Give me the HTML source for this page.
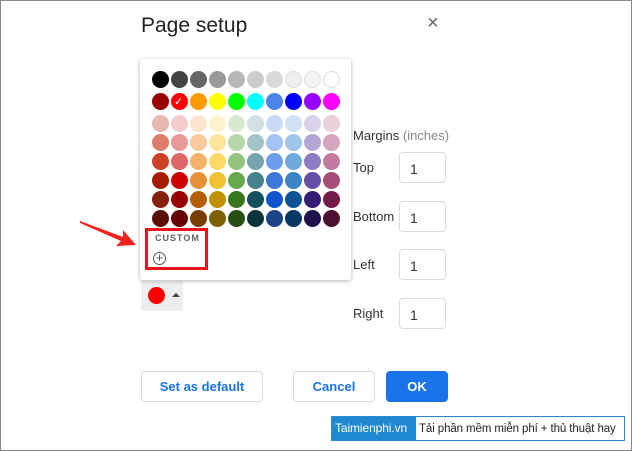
<!DOCTYPE html><html><head><style>
body{margin:0;width:632px;height:451px;position:relative;overflow:hidden;background:#fff;font-family:"Liberation Sans",Arial,sans-serif}
.a{position:absolute}
.c{position:absolute;width:17px;height:17px;border-radius:50%;box-sizing:border-box}
.inp{position:absolute;left:399px;width:47px;height:31px;border:1px solid #dadce0;border-radius:4px;box-sizing:border-box;font-size:14px;color:#333;padding:8px 0 0 10px}
.lb{position:absolute;left:353px;font-size:13px;color:#333}
.btn{position:absolute;top:371px;height:31px;border:1px solid #dadce0;border-radius:4px;box-sizing:border-box;color:#1a73e8;font-size:13px;text-align:center;line-height:29px;font-weight:bold}
</style></head><body>
<div class="a" style="left:0;top:0;width:630px;height:449px;border:1px solid #888"></div>
<div class="a" style="left:141px;top:14px;font-size:21px;color:#222">Page setup</div>
<div class="a" style="left:427px;top:12px;font-size:20px;color:#666">×</div>
<div class="lb" style="top:128px">Margins <span style="color:#888">(inches)</span></div>
<div class="lb" style="top:160px">Top</div><div class="inp" style="top:152px">1</div>
<div class="lb" style="top:209px">Bottom</div><div class="inp" style="top:201px">1</div>
<div class="lb" style="top:257px">Left</div><div class="inp" style="top:249px">1</div>
<div class="lb" style="top:306px">Right</div><div class="inp" style="top:298px">1</div>
<div class="a" style="left:141px;top:281px;width:42px;height:30px;background:#eee;border-radius:2px"></div>
<div class="c" style="left:148px;top:287px;background:#f00"></div>
<div class="a" style="left:172px;top:293px;width:0;height:0;border:4px solid transparent;border-bottom:4px solid #444;border-top:0"></div>
<div class="btn" style="left:141px;width:122px">Set as default</div>
<div class="btn" style="left:293px;width:82px">Cancel</div>
<div class="btn" style="left:386px;width:62px;background:#1a73e8;color:#fff;border-color:#1a73e8">OK</div>
<div class="a" style="left:140px;top:59px;width:211px;height:221px;background:#fff;box-shadow:0 1px 4px rgba(0,0,0,.3);border-radius:3px"></div>
<div id="g"></div>
<div class="a" style="left:145px;top:228px;width:63px;height:42px;border:3px solid #e8141b;box-sizing:border-box"></div>
<div class="a" style="left:155px;top:233px;font-size:9px;letter-spacing:1px;color:#5f6368;font-weight:bold">CUSTOM</div>
<div class="a" style="left:153px;top:252px;width:13px;height:13px;border:1.5px solid #555;border-radius:50%;box-sizing:border-box;font-size:13px;line-height:9px;text-align:center;color:#555">+</div>
<svg class="a" style="left:78px;top:218px" width="60" height="32"><polygon points="2,3 45,19 45,12 58,27 38,28 43,23 2,5" fill="#f3221e"/></svg>
<div class="a" style="left:331px;top:416px;width:294px;height:25px;border:1px solid #2a8ad4;box-sizing:border-box;font-size:11.5px;line-height:23px;white-space:nowrap;overflow:hidden;letter-spacing:-0.1px">
<span style="display:inline-block;background:#1e88d0;color:#fff;padding:0 3px;width:78px;font-size:12px">Taimienphi.vn</span><span style="color:#222;padding-left:3px">Tải phần mềm miễn phí + thủ thuật hay</span></div>
<script>
var r=[["#000","#434343","#666","#999","#b7b7b7","#ccc","#d9d9d9","#efefef","#f3f3f3","#fff"],
["#980000","#f00","#f90","#ff0","#0f0","#0ff","#4a86e8","#00f","#90f","#f0f"],
["#e6b8af","#f4cccc","#fce5cd","#fff2cc","#d9ead3","#d0e0e3","#c9daf8","#cfe2f3","#d9d2e9","#ead1dc"],
["#dd7e6b","#ea9999","#f9cb9c","#ffe599","#b6d7a8","#a2c4c9","#a4c2f4","#9fc5e8","#b4a7d6","#d5a6bd"],
["#cc4125","#e06666","#f6b26b","#ffd966","#93c47d","#76a5af","#6d9eeb","#6fa8dc","#8e7cc3","#c27ba0"],
["#a61c00","#c00","#e69138","#f1c232","#6aa84f","#45818e","#3c78d8","#3d85c6","#674ea7","#a64d79"],
["#85200c","#900","#b45f06","#bf9000","#38761d","#134f5c","#1155cc","#0b5394","#351c75","#741b47"],
["#5b0f00","#600","#783f04","#7f6000","#274e13","#0c343d","#1c4587","#073763","#20124d","#4c1130"]];
var ys=[79,101,123,142,161,180,199,218],h="";
for(var i=0;i<8;i++)for(var j=0;j<10;j++){var x=160+j*19-8.5,y=ys[i]-8.5;
h+='<div class="c" style="left:'+x+'px;top:'+y+'px;background:'+r[i][j]+(i==0&&j>=7?';border:1px solid #ddd':'')+'"></div>';}
h+='<div class="a" style="left:174px;top:95px;color:#fff;font-size:11px">✓</div>';
document.getElementById("g").innerHTML=h;
</script>
</body></html>
